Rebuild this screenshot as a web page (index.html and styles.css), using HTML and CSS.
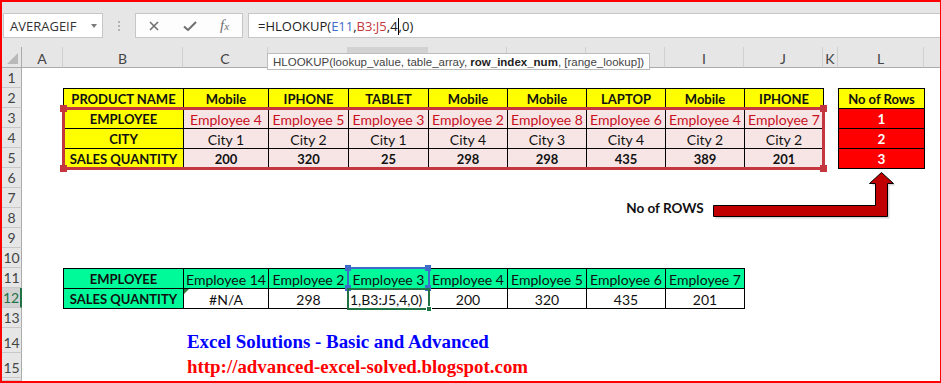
FILE: index.html
```html
<!DOCTYPE html>
<html>
<head>
<meta charset="utf-8">
<title>HLOOKUP</title>
<link rel="stylesheet" href="styles.css">
</head>
<body>
<div class="app">
  <div class="topbar">
    <div class="namebox"><span>AVERAGEIF</span><span class="caret"></span></div>
    <div class="grip"><i></i><i></i><i></i></div>
    <div class="fbtns">
      <svg class="ico-x" width="10" height="10" viewBox="0 0 10 10"><path d="M1 1L9 9M9 1L1 9" stroke="#707070" stroke-width="1.6" fill="none"/></svg>
      <svg class="ico-ok" width="14" height="10" viewBox="0 0 14 10"><path d="M1 5.5L5 9L13 1" stroke="#707070" stroke-width="2" fill="none"/></svg>
      <span class="fx">f<span class="fxs">x</span></span>
    </div>
    <div class="formula"><span>=HLOOKUP(<span class="rb">E11</span>,<span class="rr">B3:J5</span>,4<span class="cursor"></span>,0)</span></div>
  </div>

  <div class="sheet">
    <div class="ch corner"><svg width="19" height="20" viewBox="0 0 19 20"><path d="M5 17H16V6Z" fill="#b9b9b9"/></svg></div>
    <div class="ch">A</div>
    <div class="ch">B</div>
    <div class="ch">C</div>
    <div class="ch">D</div>
    <div class="ch sel">E</div>
    <div class="ch">F</div>
    <div class="ch">G</div>
    <div class="ch">H</div>
    <div class="ch">I</div>
    <div class="ch">J</div>
    <div class="ch">K</div>
    <div class="ch">L</div>
    <div class="ch last"></div>

    <div class="rh">1</div>
    <div class="rh">2</div>
    <div class="rh">3</div>
    <div class="rh">4</div>
    <div class="rh">5</div>
    <div class="rh">6</div>
    <div class="rh">7</div>
    <div class="rh">8</div>
    <div class="rh">9</div>
    <div class="rh">10</div>
    <div class="rh">11</div>
    <div class="rh sel">12</div>
    <div class="rh">13</div>
    <div class="rh tall">14</div>
    <div class="rh tall">15</div>
    <div class="rh"></div>

    <div class="t1">
      <div class="c y b">PRODUCT NAME</div>
      <div class="c y b">Mobile</div>
      <div class="c y b">IPHONE</div>
      <div class="c y b">TABLET</div>
      <div class="c y b">Mobile</div>
      <div class="c y b">Mobile</div>
      <div class="c y b">LAPTOP</div>
      <div class="c y b">Mobile</div>
      <div class="c y b">IPHONE</div>

      <div class="c y b">EMPLOYEE</div>
      <div class="c p er">Employee 4</div>
      <div class="c p er">Employee 5</div>
      <div class="c p er">Employee 3</div>
      <div class="c p er">Employee 2</div>
      <div class="c p er">Employee 8</div>
      <div class="c p er">Employee 6</div>
      <div class="c p er">Employee 4</div>
      <div class="c p er">Employee 7</div>

      <div class="c y b">CITY</div>
      <div class="c p">City 1</div>
      <div class="c p">City 2</div>
      <div class="c p">City 1</div>
      <div class="c p">City 4</div>
      <div class="c p">City 3</div>
      <div class="c p">City 4</div>
      <div class="c p">City 2</div>
      <div class="c p">City 2</div>

      <div class="c y b">SALES QUANTITY</div>
      <div class="c p b">200</div>
      <div class="c p b">320</div>
      <div class="c p b">25</div>
      <div class="c p b">298</div>
      <div class="c p b">298</div>
      <div class="c p b">435</div>
      <div class="c p b">389</div>
      <div class="c p b">201</div>

      <div class="ref-red"></div>
      <span class="hd hr tl"></span><span class="hd hr tr"></span><span class="hd hr bl"></span><span class="hd hr br"></span>
    </div>

    <div class="t2">
      <div class="c y b">No of Rows</div>
      <div class="c r">1</div>
      <div class="c r">2</div>
      <div class="c r">3</div>
    </div>

    <div class="label">No of ROWS</div>

    <div class="t3">
      <div class="c g b">EMPLOYEE</div>
      <div class="c g">Employee 14</div>
      <div class="c g">Employee 2</div>
      <div class="c g">Employee 3</div>
      <div class="c g">Employee 4</div>
      <div class="c g">Employee 5</div>
      <div class="c g">Employee 6</div>
      <div class="c g">Employee 7</div>

      <div class="c g b">SALES QUANTITY</div>
      <div class="c w err">#N/A</div>
      <div class="c w">298</div>
      <div class="c w edit"><span>1,B3:J5,4,0)</span></div>
      <div class="c w">200</div>
      <div class="c w">320</div>
      <div class="c w">435</div>
      <div class="c w">201</div>

      <div class="ref-blue"></div>
      <span class="hd hb tl"></span><span class="hd hb tr"></span><span class="hd hb bl"></span><span class="hd hb br"></span>
      <div class="active"></div>
      <span class="fill-handle"></span>
    </div>

    <div class="brand blue">Excel Solutions - Basic and Advanced</div>
    <div class="brand url">http://advanced-excel-solved.blogspot.com</div>
  </div>

  <div class="tip"><span>HLOOKUP(lookup_value, table_array, <b>row_index_num</b>, [range_lookup])</span></div>

  <svg class="arrow" width="200" height="60" viewBox="700 165 200 60">
    <path d="M715.5,207.5 H877.5 V185.5 H871.5 L883.5,174.5 L895.5,185.5 H889.5 V218.5 H715.5 Z" fill="#bdbdbd" opacity="0.6"/>
    <path d="M713.5,205.5 H875.5 V183.5 H869.5 L881.5,172.5 L893.5,183.5 H887.5 V216.5 H713.5 Z" fill="#c00000" stroke="#000" stroke-width="1"/>
  </svg>
</div>
</body>
</html>
```

FILE: styles.css
```css
* { box-sizing: border-box; margin: 0; padding: 0; }

body {
  margin: 0;
  background: #fff;
  font-family: "Lato", "Liberation Sans", sans-serif;
}

.app {
  position: relative;
  width: 941px;
  height: 383px;
  border: 2px solid #ff0000;
  border-right-width: 1px;
  overflow: hidden;
  display: flex;
  flex-direction: column;
  background: #fff;
}

/* ---------- formula bar ---------- */
.topbar {
  height: 45px;
  flex: none;
  background: #e6e6e6;
  display: flex;
  align-items: flex-start;
  padding-top: 11px;
  padding-left: 1px;
}

.namebox {
  width: 100px;
  height: 25px;
  background: #fff;
  border: 1px solid #c6c6c6;
  display: flex;
  align-items: center;
  justify-content: space-between;
  padding: 0 5px 0 6px;
  font: 13px "Open Sans", sans-serif;
  color: #333;
}

.caret {
  width: 0;
  height: 0;
  border-left: 3.5px solid transparent;
  border-right: 3.5px solid transparent;
  border-top: 4px solid #7a7a7a;
}

.grip {
  width: 32px;
  height: 25px;
  display: flex;
  flex-direction: column;
  align-items: center;
  justify-content: center;
  gap: 2px;
}
.grip i {
  display: block;
  width: 2px;
  height: 2px;
  background: #b3b3b3;
}

.fbtns {
  width: 108px;
  height: 25px;
  background: #fdfdfd;
  border: 1px solid #c6c6c6;
  display: flex;
  align-items: center;
}
.ico-x { margin-left: 13px; }
.ico-ok { margin-left: 24px; }
.fx {
  margin-left: 23px;
  font: italic 15px "Liberation Serif", serif;
  color: #707070;
}
.fxs { font-size: 11px; }

.formula {
  flex: 1;
  margin-left: 5px;
  height: 25px;
  background: #fff;
  border: 1px solid #c6c6c6;
  border-right: none;
  padding-left: 9px;
  display: flex;
  align-items: center;
  font: 13px "Open Sans", sans-serif;
  color: #222;
  white-space: pre;
}
.rb { color: #3e6cc9; }
.rr { color: #c4373f; }
.cursor {
  display: inline-block;
  width: 1px;
  height: 17px;
  background: #000;
  vertical-align: -4px;
}

/* ---------- sheet ---------- */
.sheet {
  flex: 1;
  display: grid;
  grid-template-columns: 20px 41px 120px 85px 80px 80px 79px 79px 79px 79px 79px 15px 86px 1fr;
  grid-template-rows: 21px repeat(13, 20px) 25px 25px 1fr;
  font-size: 14px;
  color: #111;
}

.ch {
  background: #e6e6e6;
  border-right: 1px solid #d0d0d0;
  border-bottom: 1px solid #ababab;
  display: flex;
  align-items: center;
  justify-content: center;
  color: #444;
  font-size: 14px;
  padding-top: 3px;
}
.ch.corner {
  padding: 0;
  border-right-color: #ababab;
  align-items: flex-end;
  justify-content: flex-start;
}
.ch.last { border-right: none; }
.ch.sel {
  background: #d2d2d2;
  color: #217346;
}

.rh {
  grid-column: 1;
  background: #e6e6e6;
  border-right: 1px solid #ababab;
  border-bottom: 1px solid #c8c8c8;
  display: flex;
  align-items: center;
  justify-content: center;
  color: #444;
  font-size: 14px;
}
.rh.tall { padding-top: 5px; }
.rh.sel {
  background: #d2d2d2;
  color: #217346;
  border-right: 2px solid #217346;
}

/* tables built as grids, black gaps = borders */
.t1, .t2, .t3 {
  position: relative;
  display: grid;
  gap: 1px;
  padding: 1px;
  background: #000;
  width: calc(100% + 1px);
  height: calc(100% + 1px);
}
.t1 {
  grid-column: 3 / 12;
  grid-row: 3 / 7;
  grid-template-columns: 119px 84px 79px 79px 78px 78px 78px 78px 78px;
  grid-template-rows: repeat(4, 19px);
}
.t2 {
  grid-column: 13 / 14;
  grid-row: 3 / 7;
  grid-template-columns: 85px;
  grid-template-rows: repeat(4, 19px);
}
.t3 {
  grid-column: 3 / 11;
  grid-row: 12 / 14;
  grid-template-columns: 119px 84px 79px 79px 78px 78px 78px 78px;
  grid-template-rows: repeat(2, 19px);
}

.c {
  display: flex;
  align-items: center;
  justify-content: center;
  white-space: nowrap;
  overflow: hidden;
  padding-top: 1px;
  color: #111;
}
.y { background: #ffff00; }
.p { background: #f7e5e5; }
.er { color: #c8101e; }
.b { font-weight: 700; font-size: 13px; }
.r { background: #ff0000; color: #fff; font-weight: 700; font-size: 13.5px; }
.g { background: #00fa9a; }
.w { background: #fff; }

.err { position: relative; }
.err::before {
  content: "";
  position: absolute;
  left: 0;
  top: 0;
  border-top: 5px solid #2f7a3f;
  border-right: 5px solid transparent;
}

.edit {
  justify-content: flex-start;
  padding-left: 1px;
}

/* reference highlights */
.ref-red {
  position: absolute;
  left: -1px;
  top: 19px;
  width: 763px;
  height: 63px;
  border: 3px solid #c4373f;
}
.hd {
  position: absolute;
  width: 7px;
  height: 7px;
}
.hr { background: #c4373f; }
.t1 .tl { left: -3px; top: 17px; }
.t1 .tr { left: 757px; top: 17px; }
.t1 .bl { left: -3px; top: 77px; }
.t1 .br { left: 757px; top: 77px; }

.ref-blue {
  position: absolute;
  left: 284px;
  top: -1px;
  width: 83px;
  height: 23px;
  border: 2px solid #3e6cc9;
}
.hb { background: #3e6cc9; width: 6px; height: 6px; }
.t3 .tl { left: 282px; top: -3px; }
.t3 .tr { left: 362px; top: -3px; }
.t3 .bl { left: 282px; top: 17px; }
.t3 .br { left: 362px; top: 17px; }

.active {
  position: absolute;
  left: 284px;
  top: 20px;
  width: 83px;
  height: 22px;
  border: 2px solid #217346;
}
.fill-handle {
  position: absolute;
  left: 363px;
  top: 38px;
  width: 6px;
  height: 6px;
  background: #217346;
  border: 1px solid #fff;
}

.label {
  grid-column: 9 / 11;
  grid-row: 8 / 10;
  display: flex;
  align-items: center;
  justify-content: center;
  font-weight: 700;
  font-size: 13.5px;
  color: #111;
}

.brand {
  grid-column: 3 / 14;
  padding-left: 124px;
  display: flex;
  align-items: center;
  padding-top: 3px;
  font: bold 18.9px "Liberation Serif", serif;
  white-space: nowrap;
}
.brand.blue { grid-row: 15 / 16; color: #0000ff; }
.brand.url { grid-row: 16 / 17; color: #ff0000; }

/* overlays */
.tip {
  position: absolute;
  left: 265px;
  top: 51px;
  width: 383px;
  height: 17px;
  background: #fff;
  border: 1px solid #bdbdbd;
  padding-left: 5px;
  display: flex;
  align-items: center;
  font: 11.5px "Liberation Sans", sans-serif;
  color: #444;
  white-space: pre;
  overflow: hidden;
}
.tip b { font-weight: 700; color: #222; }

.arrow {
  position: absolute;
  left: 698px;
  top: 163px;
}
```
